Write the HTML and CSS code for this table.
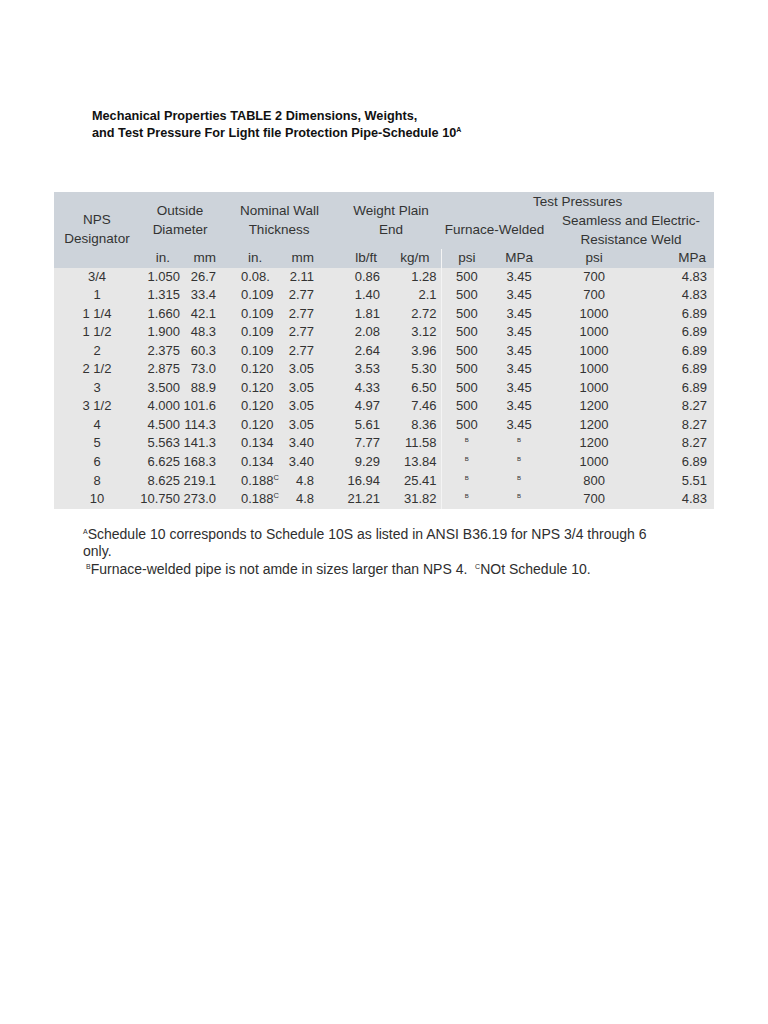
FILE: index.html
```html
<!DOCTYPE html>
<html lang="en">
<head>
<meta charset="utf-8">
<title>Mechanical Properties TABLE 2</title>
<link rel="stylesheet" href="styles.css">
</head>
<body>
<div class="page">
  <h1 class="title">Mechanical Properties TABLE 2 Dimensions, Weights,<br>and Test Pressure For Light file Protection Pipe-Schedule 10<sup class="tsup">A</sup></h1>

  <table class="spec">
    <colgroup>
      <col class="c1"><col class="c2"><col class="c3"><col class="c4"><col class="c5"><col class="c6"><col class="c7"><col class="c8"><col class="c9"><col class="c10"><col class="c11">
    </colgroup>
    <thead>
      <tr class="h1">
        <th rowspan="3" class="nps">NPS<br>Designator</th>
        <th rowspan="2" colspan="2" class="od">Outside<br>Diameter</th>
        <th rowspan="2" colspan="2" class="nw">Nominal Wall<br>Thickness</th>
        <th rowspan="2" colspan="2" class="wt">Weight Plain<br>End</th>
        <th colspan="4" class="tp">Test Pressures</th>
      </tr>
      <tr class="h2">
        <th colspan="2" class="fw">Furnace-Welded</th>
        <th colspan="2" class="sl">Seamless and Electric-<br>Resistance Weld</th>
      </tr>
      <tr class="h3">
        <th class="u-odin">in.</th>
        <th class="u-odmm">mm</th>
        <th class="u-nwin">in.</th>
        <th class="u-nwmm">mm</th>
        <th class="u-lb">lb/ft</th>
        <th class="u-kg">kg/m</th>
        <th class="u-fpsi sep">psi</th>
        <th class="u-fmpa">MPa</th>
        <th class="u-spsi">psi</th>
        <th class="u-smpa">MPa</th>
      </tr>
    </thead>
    <tbody>
      <tr><td class="d1">3/4</td><td class="d2">1.050</td><td class="d3">26.7</td><td class="d4">0.08.</td><td class="d5">2.11</td><td class="d6">0.86</td><td class="d7">1.28</td><td class="d8 sep">500</td><td class="d9">3.45</td><td class="d10">700</td><td class="d11">4.83</td></tr>
      <tr><td class="d1">1</td><td class="d2">1.315</td><td class="d3">33.4</td><td class="d4">0.109</td><td class="d5">2.77</td><td class="d6">1.40</td><td class="d7">2.1</td><td class="d8 sep">500</td><td class="d9">3.45</td><td class="d10">700</td><td class="d11">4.83</td></tr>
      <tr><td class="d1">1 1/4</td><td class="d2">1.660</td><td class="d3">42.1</td><td class="d4">0.109</td><td class="d5">2.77</td><td class="d6">1.81</td><td class="d7">2.72</td><td class="d8 sep">500</td><td class="d9">3.45</td><td class="d10">1000</td><td class="d11">6.89</td></tr>
      <tr><td class="d1">1 1/2</td><td class="d2">1.900</td><td class="d3">48.3</td><td class="d4">0.109</td><td class="d5">2.77</td><td class="d6">2.08</td><td class="d7">3.12</td><td class="d8 sep">500</td><td class="d9">3.45</td><td class="d10">1000</td><td class="d11">6.89</td></tr>
      <tr><td class="d1">2</td><td class="d2">2.375</td><td class="d3">60.3</td><td class="d4">0.109</td><td class="d5">2.77</td><td class="d6">2.64</td><td class="d7">3.96</td><td class="d8 sep">500</td><td class="d9">3.45</td><td class="d10">1000</td><td class="d11">6.89</td></tr>
      <tr><td class="d1">2 1/2</td><td class="d2">2.875</td><td class="d3">73.0</td><td class="d4">0.120</td><td class="d5">3.05</td><td class="d6">3.53</td><td class="d7">5.30</td><td class="d8 sep">500</td><td class="d9">3.45</td><td class="d10">1000</td><td class="d11">6.89</td></tr>
      <tr><td class="d1">3</td><td class="d2">3.500</td><td class="d3">88.9</td><td class="d4">0.120</td><td class="d5">3.05</td><td class="d6">4.33</td><td class="d7">6.50</td><td class="d8 sep">500</td><td class="d9">3.45</td><td class="d10">1000</td><td class="d11">6.89</td></tr>
      <tr><td class="d1">3 1/2</td><td class="d2">4.000</td><td class="d3">101.6</td><td class="d4">0.120</td><td class="d5">3.05</td><td class="d6">4.97</td><td class="d7">7.46</td><td class="d8 sep">500</td><td class="d9">3.45</td><td class="d10">1200</td><td class="d11">8.27</td></tr>
      <tr><td class="d1">4</td><td class="d2">4.500</td><td class="d3">114.3</td><td class="d4">0.120</td><td class="d5">3.05</td><td class="d6">5.61</td><td class="d7">8.36</td><td class="d8 sep">500</td><td class="d9">3.45</td><td class="d10">1200</td><td class="d11">8.27</td></tr>
      <tr><td class="d1">5</td><td class="d2">5.563</td><td class="d3">141.3</td><td class="d4">0.134</td><td class="d5">3.40</td><td class="d6">7.77</td><td class="d7">11.58</td><td class="d8 sep"><sup class="bsup">B</sup></td><td class="d9"><sup class="bsup">B</sup></td><td class="d10">1200</td><td class="d11">8.27</td></tr>
      <tr><td class="d1">6</td><td class="d2">6.625</td><td class="d3">168.3</td><td class="d4">0.134</td><td class="d5">3.40</td><td class="d6">9.29</td><td class="d7">13.84</td><td class="d8 sep"><sup class="bsup">B</sup></td><td class="d9"><sup class="bsup">B</sup></td><td class="d10">1000</td><td class="d11">6.89</td></tr>
      <tr><td class="d1">8</td><td class="d2">8.625</td><td class="d3">219.1</td><td class="d4">0.188<sup class="csup">C</sup></td><td class="d5">4.8</td><td class="d6">16.94</td><td class="d7">25.41</td><td class="d8 sep"><sup class="bsup">B</sup></td><td class="d9"><sup class="bsup">B</sup></td><td class="d10">800</td><td class="d11">5.51</td></tr>
      <tr><td class="d1">10</td><td class="d2">10.750</td><td class="d3">273.0</td><td class="d4">0.188<sup class="csup">C</sup></td><td class="d5">4.8</td><td class="d6">21.21</td><td class="d7">31.82</td><td class="d8 sep"><sup class="bsup">B</sup></td><td class="d9"><sup class="bsup">B</sup></td><td class="d10">700</td><td class="d11">4.83</td></tr>
    </tbody>
  </table>

  <div class="notes">
    <p class="note"><sup class="nsup">A</sup>Schedule 10 corresponds to Schedule 10S as listed in ANSI B36.19 for NPS 3/4 through 6<br>only.</p>
    <p class="note note-b"><sup class="nsup">B</sup>Furnace-welded pipe is not amde in sizes larger than NPS 4.&nbsp; <sup class="nsup">C</sup>NOt Schedule 10.</p>
  </div>
</div>
</body>
</html>
```

FILE: styles.css
```css
html, body {
  margin: 0;
  padding: 0;
  background: #ffffff;
}

.page {
  font-family: "Liberation Sans", Arial, sans-serif;
  color: #2e2e2e;
  padding-top: 108px;
}

.title {
  margin: 0 0 50px 92px;
  font-size: 12.7px;
  line-height: 17px;
  font-weight: bold;
  color: #111111;
}

.tsup {
  font-size: 7px;
  vertical-align: top;
  line-height: 1;
  position: relative;
  top: 1px;
}

.spec {
  margin-left: 54px;
  border-collapse: collapse;
  table-layout: fixed;
  width: 660px;
  font-size: 13.5px;
  color: #333333;
}

.c1 { width: 80px; }
.c2 { width: 48px; }
.c3 { width: 36px; }
.c4 { width: 68px; }
.c5 { width: 32px; }
.c6 { width: 64px; }
.c7 { width: 59px; }
.c8 { width: 49px; }
.c9 { width: 58px; }
.c10 { width: 92px; }
.c11 { width: 74px; }

th,
td {
  padding: 0;
  white-space: nowrap;
}

.spec th {
  font-weight: normal;
}

.spec thead th {
  background: #cdd3da;
  line-height: 18.5px;
  vertical-align: middle;
}

.h1 th { height: 20px; }
.h2 th { height: 36px; }
.h3 th { height: 18px; }

.nps { text-align: center; padding-left: 6px; }
.od { text-align: center; padding-left: 8px; }
.nw { text-align: center; padding-left: 22px; }
.wt { text-align: center; padding-left: 23px; }
.tp { text-align: center; }
.fw { text-align: center; }
.sl { text-align: center; }

.u-odin { text-align: center; padding-left: 10px; }
.u-odmm { text-align: right; padding-right: 2px; }
.u-nwin { text-align: left; padding-left: 30px; }
.u-nwmm { text-align: right; padding-right: 4px; }
.u-lb { text-align: right; padding-right: 5px; }
.u-kg { text-align: right; padding-right: 11px; }
.u-fpsi { text-align: center; padding-left: 2px; }
.u-fmpa { text-align: center; }
.u-spsi { text-align: center; }
.u-smpa { text-align: right; padding-right: 8px; }

.spec tbody td {
  background: #e7e7e7;
  font-size: 13px;
  height: 18.55px;
  line-height: 18.5px;
}

.sep { border-left: 1px solid #f4f4f4; }

.d1 { text-align: center; padding-left: 6px; }
.d2 { text-align: right; padding-right: 2px; }
.d3 { text-align: right; padding-right: 2px; }
.d4 { text-align: left; padding-left: 23px; }
.d5 { text-align: right; padding-right: 4px; }
.d6 { text-align: right; padding-right: 2px; }
.d7 { text-align: right; padding-right: 4px; }
.d8 { text-align: center; padding-left: 2px; }
.d9 { text-align: center; }
.d10 { text-align: center; }
.d11 { text-align: right; padding-right: 7px; }

.csup {
  font-size: 7.5px;
  vertical-align: top;
  line-height: 1;
  position: relative;
  top: 2px;
}

.bsup {
  font-size: 6px;
  vertical-align: top;
  line-height: 1;
  position: relative;
  top: 3px;
}

.notes {
  margin: 17px 0 0 83px;
  font-size: 14px;
  line-height: 17.5px;
  color: #2e2e2e;
}

.note {
  margin: 0;
}

.note-b {
  padding-left: 3px;
}

.nsup {
  font-size: 7px;
  vertical-align: top;
  line-height: 1;
  position: relative;
  top: 2px;
}
```
